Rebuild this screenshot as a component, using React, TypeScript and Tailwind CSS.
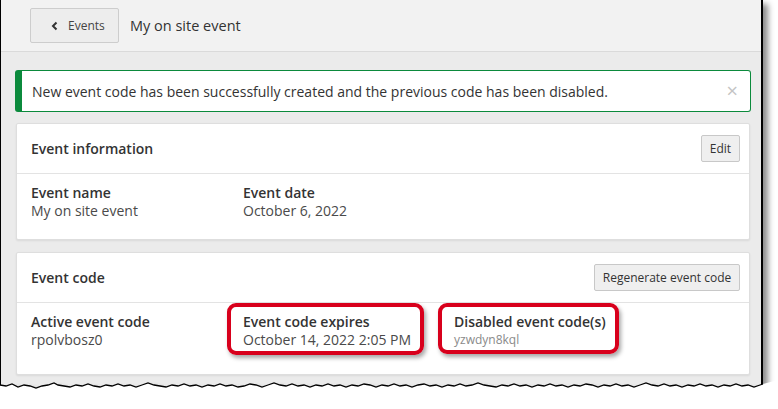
import { FunctionComponent, ReactNode } from "react";

// jagged bottom edge of the page capture
const tornPoints: [number, number][] = [
  [0, 5], [6, 6], [12, 4], [18, 7], [24, 5], [30, 6], [36, 8], [42, 6], [48, 5], [54, 3], [58, 5],
  [64, 6], [70, 7], [76, 5], [82, 6], [88, 4], [94, 6], [100, 7], [106, 5], [112, 6], [118, 4],
  [124, 6], [130, 5], [136, 7], [142, 5], [148, 3], [154, 5], [160, 6], [166, 7], [172, 5],
  [178, 6], [184, 4], [190, 6], [196, 5], [202, 7], [208, 5], [214, 6], [220, 4], [226, 6],
  [232, 5], [238, 7], [244, 6], [250, 4], [256, 5], [262, 7], [268, 5], [274, 3], [280, 5],
  [286, 6], [292, 4], [298, 6], [304, 5], [310, 7], [316, 5], [322, 6], [328, 4], [334, 6],
  [340, 5], [346, 7], [352, 5], [358, 6], [364, 4], [370, 5], [376, 7], [382, 5], [388, 6],
  [394, 4], [400, 6], [406, 5], [412, 7], [418, 5], [424, 4], [430, 6], [436, 5], [442, 7],
  [448, 5], [454, 6], [460, 4], [466, 6], [472, 5], [478, 3], [484, 5], [490, 6], [496, 7],
  [502, 5], [508, 6], [514, 4], [520, 6], [526, 5], [532, 7], [538, 5], [544, 6], [550, 4],
  [556, 6], [562, 5], [568, 7], [574, 5], [580, 6], [586, 4], [592, 5], [598, 7], [604, 5],
  [610, 6], [616, 4], [622, 6], [628, 5], [634, 7], [640, 5], [646, 3], [652, 5], [658, 6],
  [664, 4], [670, 6], [676, 5], [682, 7], [688, 5], [694, 6], [700, 4], [706, 6], [712, 5],
  [718, 7], [724, 5], [730, 6], [736, 4], [742, 6], [748, 5], [754, 7], [760, 5], [763, 4],
];

const tornLine = tornPoints.map(([x, y]) => `${x},${y}`).join(" ");
const shadowLine = tornPoints.map(([x, y]) => `${x + 6},${y + 4}`).join(" ");

const Button: FunctionComponent<{ children: ReactNode; className?: string }> = ({ children, className = "" }) => (
  <button
    className={`h-[27px] rounded-[2px] border border-[#c8c8c8] bg-[#efefef] text-[12px] text-[#333] ${className}`}
  >
    {children}
  </button>
);

const Field: FunctionComponent<{ label: string; value: string; small?: boolean; highlight?: boolean; className?: string }> = ({
  label,
  value,
  small,
  highlight,
  className = "",
}) => (
  <div className={className}>
    <div className="relative w-fit">
      {highlight && (
        <div className="pointer-events-none absolute -left-[16px] -top-[9px] -right-[13px] -bottom-[6px] rounded-[9px] border-4 border-[#d8001c] shadow-[2px_3px_4px_rgba(0,0,0,0.35)]" />
      )}
      <div className="text-[14px] font-semibold leading-[19px] text-[#333]">{label}</div>
      {small ? (
        <div className="text-[12px] leading-[17px] text-[#8a8a8a]">{value}</div>
      ) : (
        <div className="text-[14px] leading-[18px] text-[#4a4a4a]">{value}</div>
      )}
    </div>
  </div>
);

const Card: FunctionComponent<{ title: string; action: ReactNode; children: ReactNode; bodyClass: string }> = ({
  title,
  action,
  children,
  bodyClass,
}) => (
  <section className="mx-[1px] rounded-[2px] border border-[#dedede] bg-white shadow-[0_1px_2px_rgba(0,0,0,0.08)]">
    <div className="flex h-[50px] items-center justify-between border-b border-[#e3e3e3] pl-[14px] pr-[9px]">
      <h2 className="text-[14px] font-semibold text-[#333]">{title}</h2>
      {action}
    </div>
    <div className={`flex px-[14px] ${bodyClass}`}>{children}</div>
  </section>
);

export default function App() {
  return (
    <div className="relative h-[409px] w-[778px] overflow-hidden bg-white font-['Open_Sans',sans-serif]">
      <div className="h-[392px] w-[763px] border-l border-r-2 border-black bg-[#ebebeb] shadow-[5px_4px_6px_rgba(0,0,0,0.45)]">
        <header className="flex h-[52px] items-center gap-[11px] border-b border-[#dadada] bg-[#f2f2f2] pl-[29px]">
          <button className="flex h-[35px] w-[89px] items-center gap-[9px] rounded-[2px] border border-[#cdcdcd] bg-[#ededed] pl-[20px] text-[12px] text-[#444]">
            <svg width="8" height="10" viewBox="0 0 8 10" className="text-[#333]">
              <path d="M5.5 1.5 L2 5 L5.5 8.5" fill="none" stroke="currentColor" strokeWidth="2" />
            </svg>
            Events
          </button>
          <h1 className="text-[14.5px] text-[#333]">My on site event</h1>
        </header>

        <main className="flex flex-col pl-[14px] pr-[10px] pt-[18px]">
          <div className="flex h-[42px] items-center justify-between rounded-[3px] border border-l-[7px] border-[#0b8a3c] bg-white pl-[10px] pr-[12px]">
            <p className="text-[14px] text-[#333]">
              New event code has been successfully created and the previous code has been disabled.
            </p>
            <span className="text-[20px] leading-none text-[#c4c4c4]">×</span>
          </div>

          <div className="mt-[11px]">
            <Card title="Event information" action={<Button className="w-[39px]">Edit</Button>} bodyClass="h-[65px] pt-[9px]">
              <Field label="Event name" value="My on site event" className="w-[212px]" />
              <Field label="Event date" value="October 6, 2022" />
            </Card>
          </div>

          <div className="mt-[12px]">
            <Card
              title="Event code"
              action={<Button className="w-[146px]">Regenerate event code</Button>}
              bodyClass="h-[71px] pt-[9px]"
            >
              <Field label="Active event code" value="rpolvbosz0" className="w-[212px]" />
              <Field label="Event code expires" value="October 14, 2022 2:05 PM" highlight className="w-[211px]" />
              <Field label="Disabled event code(s)" value="yzwdyn8kql" small highlight />
            </Card>
          </div>
        </main>
      </div>

      {/* torn bottom edge with its shadow */}
      <svg className="absolute left-0 top-[380px]" width="778" height="29" viewBox="0 0 778 29">
        <defs>
          <filter id="tornShadow" x="-5%" y="-50%" width="110%" height="200%">
            <feGaussianBlur stdDeviation="2.5" />
          </filter>
        </defs>
        <polygon points={`${shadowLine} 772,20 6,20`} fill="rgba(0,0,0,0.55)" filter="url(#tornShadow)" />
        <polygon points={`${tornLine} 778,0 778,29 0,29`} fill="white" />
        <polyline points={tornLine} fill="none" stroke="black" strokeWidth="1.3" />
      </svg>
    </div>
  );
}
